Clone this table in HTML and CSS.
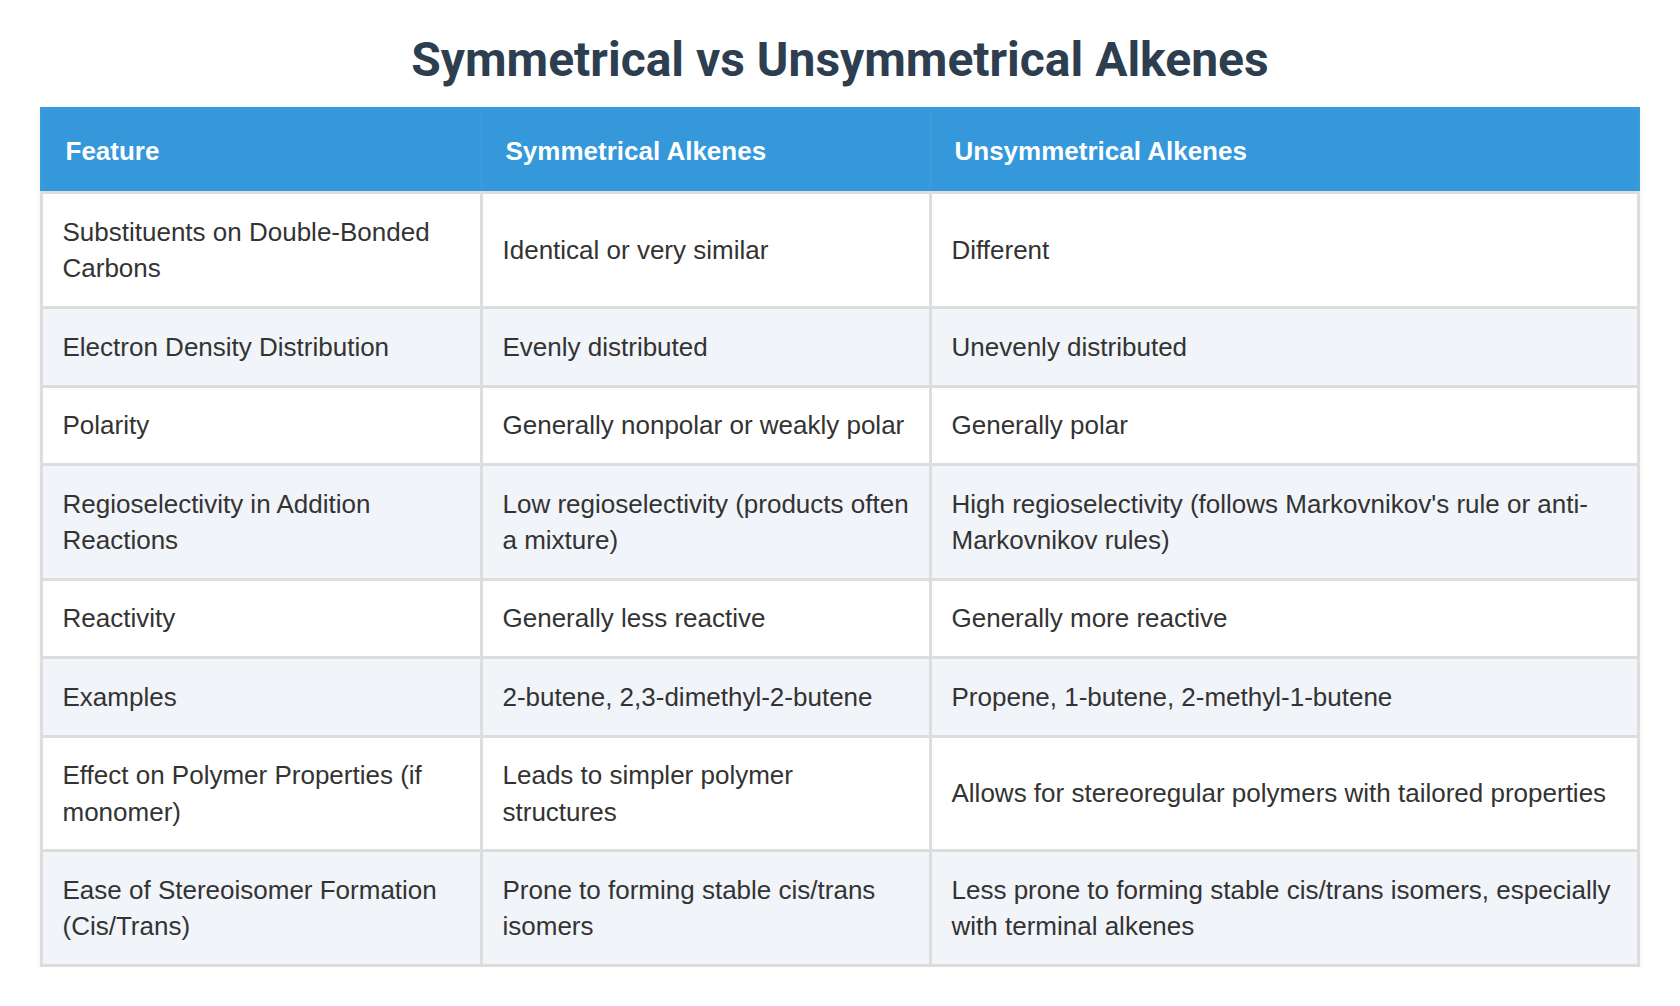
FILE: index.html
```html
<!DOCTYPE html>
<html lang="en">
<head>
<meta charset="utf-8">
<title>Symmetrical vs Unsymmetrical Alkenes</title>
<link rel="stylesheet" href="styles.css">
</head>
<body>
<main class="page">
  <h1 class="title">Symmetrical vs Unsymmetrical Alkenes</h1>
  <table class="compare">
    <colgroup>
      <col class="c1">
      <col class="c2">
      <col class="c3">
    </colgroup>
    <thead>
      <tr>
        <th>Feature</th>
        <th>Symmetrical Alkenes</th>
        <th>Unsymmetrical Alkenes</th>
      </tr>
    </thead>
    <tbody>
      <tr>
        <td>Substituents on Double-Bonded Carbons</td>
        <td>Identical or very similar</td>
        <td>Different</td>
      </tr>
      <tr>
        <td>Electron Density Distribution</td>
        <td>Evenly distributed</td>
        <td>Unevenly distributed</td>
      </tr>
      <tr>
        <td>Polarity</td>
        <td>Generally nonpolar or weakly polar</td>
        <td>Generally polar</td>
      </tr>
      <tr>
        <td>Regioselectivity in Addition Reactions</td>
        <td>Low regioselectivity (products often a mixture)</td>
        <td>High regioselectivity (follows Markovnikov's rule or anti-Markovnikov rules)</td>
      </tr>
      <tr>
        <td>Reactivity</td>
        <td>Generally less reactive</td>
        <td>Generally more reactive</td>
      </tr>
      <tr>
        <td>Examples</td>
        <td>2-butene, 2,3-dimethyl-2-butene</td>
        <td>Propene, 1-butene, 2-methyl-1-butene</td>
      </tr>
      <tr>
        <td>Effect on Polymer Properties (if monomer)</td>
        <td>Leads to simpler polymer structures</td>
        <td>Allows for stereoregular polymers with tailored properties</td>
      </tr>
      <tr>
        <td>Ease of Stereoisomer Formation (Cis/Trans)</td>
        <td>Prone to forming stable cis/trans isomers</td>
        <td>Less prone to forming stable cis/trans isomers, especially with terminal alkenes</td>
      </tr>
    </tbody>
  </table>
</main>
</body>
</html>
```

FILE: styles.css
```css
html, body {
  margin: 0;
  padding: 0;
  background: #ffffff;
}

body {
  font-family: "Liberation Sans", Arial, sans-serif;
  color: #333333;
}

.page {
  padding-top: 32px;
  display: flex;
  flex-direction: column;
  align-items: center;
}

.title {
  margin: 0 0 19px 0;
  font-family: Roboto, "Liberation Sans", sans-serif;
  font-weight: 700;
  font-size: 48px;
  line-height: 56px;
  color: #2c3e50;
  text-align: center;
}

.compare {
  width: 1597px;
  table-layout: fixed;
  border-collapse: collapse;
  font-size: 26px;
  line-height: 36.4px;
  box-shadow: 0 1px 4px rgba(0, 0, 0, 0.08);
}

.c1 { width: 440px; }
.c2 { width: 449px; }
.c3 { width: 708px; }

.compare th {
  background: #3498db;
  color: #ffffff;
  font-weight: 700;
  text-align: left;
  padding: 22.5px 22.5px;
  border: 3px solid #3a9bdc;
  border-bottom-color: #dddddd;
}

.compare td {
  padding: 19.5px 19.5px;
  border: 3px solid #dddddd;
  vertical-align: middle;
  text-align: left;
}

.compare tbody tr:nth-child(even) td {
  background: #f1f4f9;
}

.compare tbody tr:nth-child(odd) td {
  background: #ffffff;
}
```
